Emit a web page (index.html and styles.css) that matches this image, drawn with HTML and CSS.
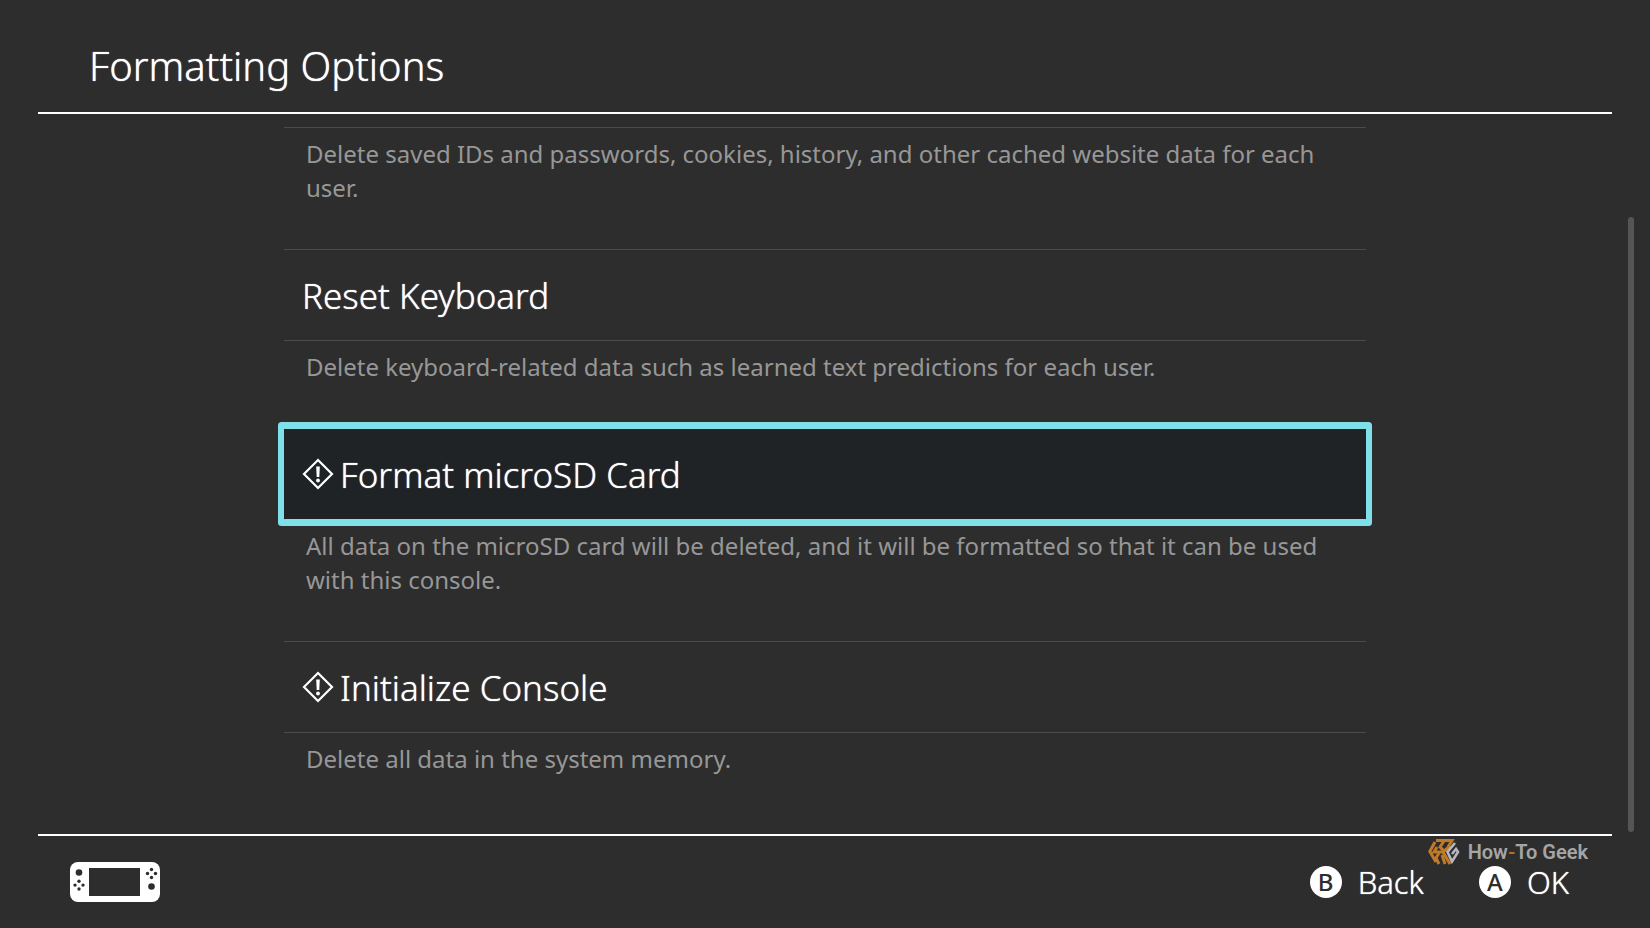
FILE: index.html
```html
<!DOCTYPE html>
<html lang="en">
<head>
    <meta charset="UTF-8">
    <meta name="viewport" content="width=device-width, initial-scale=1.0">
    <title>Formatting Options</title>

    <link rel="stylesheet" href="styles.css">

</head>
<body>

    <header class="page-header">
        <h1 class="page-title">Formatting Options</h1>
    </header>

    <main class="content">
        <ul class="options-list">
            <li class="option">
                <p class="option-dsc option-dsc-first">Delete saved IDs and passwords, cookies, history, and other cached website data for each user.</p>
            </li>
            <li class="option">
                <button class="option-btn" type="button">Reset Keyboard</button>
                <p class="option-dsc">Delete keyboard-related data such as learned text predictions for each user.</p>
            </li>
            <li class="option">
                <button class="option-btn selected" type="button">
                    <svg class="warning-icon" viewBox="0 0 32 32" aria-hidden="true">
                        <path d="M16 2 L30 16 L16 30 L2 16 Z" fill="none" stroke="currentColor" stroke-width="2.2"/>
                        <path d="M14.2 8.500 h3.600 l-.5 10.500 h-2.600 z" fill="currentColor"/>
                        <circle cx="16" cy="22.500" r="1.900" fill="currentColor"/>
                    </svg>
                    Format microSD Card
                </button>
                <p class="option-dsc">All data on the microSD card will be deleted, and it will be formatted so that it can be used with this console.</p>
            </li>
            <li class="option">
                <button class="option-btn" type="button">
                    <svg class="warning-icon" viewBox="0 0 32 32" aria-hidden="true">
                        <path d="M16 2 L30 16 L16 30 L2 16 Z" fill="none" stroke="currentColor" stroke-width="2.2"/>
                        <path d="M14.2 8.500 h3.600 l-.5 10.500 h-2.600 z" fill="currentColor"/>
                        <circle cx="16" cy="22.500" r="1.900" fill="currentColor"/>
                    </svg>
                    Initialize Console
                </button>
                <p class="option-dsc">Delete all data in the system memory.</p>
            </li>
        </ul>
        <div class="scroll-thumb"></div>
    </main>

    <footer class="page-footer">
        <svg class="console-icon" viewBox="0 0 90 40" aria-hidden="true">
            <rect width="90" height="40" rx="8" fill="#fff"/>
            <g fill="#2d2d2d">
                <rect x="19" y="6" width="51" height="28"/>
                <circle cx="9" cy="10.500" r="3.300"/>
                <circle cx="9" cy="19.200" r="1.700"/>
                <circle cx="9" cy="27" r="1.700"/>
                <circle cx="5" cy="23.100" r="1.700"/>
                <circle cx="13" cy="23.100" r="1.700"/>
                <circle cx="81.500" cy="7.500" r="1.700"/>
                <circle cx="81.500" cy="15.500" r="1.700"/>
                <circle cx="77.500" cy="11.500" r="1.700"/>
                <circle cx="85.500" cy="11.500" r="1.700"/>
                <circle cx="81.500" cy="24.500" r="3.300"/>
            </g>
        </svg>
        <div class="actions">
            <button class="action-btn" type="button"><span class="key">B</span>Back</button>
            <button class="action-btn" type="button"><span class="key">A</span>OK</button>
        </div>
        <div class="watermark">
            <svg class="watermark-logo" viewBox="0 0 32 28" aria-hidden="true">
                <g fill="none" stroke="#c27a26" stroke-width="3">
                    <path d="M8 2.500 H24 L20 9"/>
                    <path d="M16 3 L12 9 L16 13"/>
                    <path d="M7 4 L1.800 13.500 L8 24"/>
                    <path d="M9 9 L6 14 L14 14"/>
                    <path d="M22 8 L15 14 L22 26"/>
                    <path d="M11 15 L8 20 L11 26"/>
                    <path d="M14 17 L17 26"/>
                </g>
                <path d="M27 5 L19.500 14 L24 23.500 L30 14 L28 11 L24 16" fill="none" stroke="#b5b8bd" stroke-width="2.600"/>
            </svg>
            <span class="watermark-text">How<span class="dash">-</span>To Geek</span>
        </div>
    </footer>

</body>

</html>
```
FILE: styles.css
```css
body, body *, body *::before, body *::after {
    box-sizing: border-box;
    padding: 0;
    margin: 0;
}
:root {
    --bgc: #2d2d2d;
    --text-color: #fff;
    --dsc-color: #979797;
    --line-color: #4b4b4b;
    --select-color: #80e0ea;
    --select-bgc: #1f2326;
    --side-space: 38px;
}
body {
    background-color: var(--bgc);
    color: var(--text-color);
    font-family: "Noto Sans", "Open Sans", sans-serif;
    display: flex;
    flex-direction: column;
    min-height: 100vh;
}
.page-header {
    margin: 0 var(--side-space);
    padding: 38px 51px 18px;
    border-bottom: 2px solid var(--text-color);
}
.page-title {
    font-size: 40px;
    font-weight: 300;
    line-height: 56px;
    text-shadow: 0 0 1px var(--text-color);
}
.content {
    flex: 1;
    display: grid;
    grid-template-columns: 1fr minmax(0, 1082px) 1fr;
    padding-top: 13px;
}
.options-list {
    grid-column: 2;
    list-style-type: none;
}
.option-btn {
    display: flex;
    align-items: center;
    gap: 6px;
    width: 100%;
    height: 92px;
    padding: 0 18px;
    background: none;
    border: 0 solid var(--line-color);
    border-width: 1px 0;
    color: inherit;
    font: inherit;
    font-size: 35px;
    font-weight: 300;
    text-align: left;
    text-shadow: 0 0 1px var(--text-color);
}
.option-btn.selected {
    background-color: var(--select-bgc);
    border-color: var(--select-color);
    border-radius: 1px;
    box-shadow: 0 0 0 6px var(--select-color);
}
.warning-icon {
    width: 32px;
    height: 32px;
}
.option-dsc {
    color: var(--dsc-color);
    font-size: 24px;
    line-height: 34px;
    padding: 9px 22px 44px;
}
.option-dsc-first {
    border-top: 1px solid var(--line-color);
}
.scroll-thumb {
    grid-column: 3;
    justify-self: end;
    align-self: end;
    width: 6px;
    height: 87%;
    margin: 0 16px 2px 0;
    border-radius: 3px;
    background-color: #555;
}
.page-footer {
    position: relative;
    display: flex;
    align-items: center;
    justify-content: space-between;
    height: 94px;
    margin: 0 var(--side-space);
    padding: 0 43px 0 32px;
    border-top: 2px solid var(--text-color);
}
.console-icon {
    width: 90px;
    height: 40px;
}
.actions {
    display: flex;
    gap: 55px;
}
.action-btn {
    display: flex;
    align-items: center;
    gap: 16px;
    background: none;
    border: none;
    color: inherit;
    font: inherit;
    font-size: 31px;
    font-weight: 300;
    line-height: 32px;
    text-shadow: 0 0 1px var(--text-color);
}
.key {
    width: 32px;
    height: 32px;
    border-radius: 50%;
    background-color: var(--text-color);
    color: var(--bgc);
    font-size: 24px;
    font-weight: 500;
    line-height: 32px;
    text-align: center;
    text-shadow: none;
}
.watermark {
    position: absolute;
    top: 2px;
    right: 24px;
    display: flex;
    align-items: center;
    gap: 8px;
    color: #a5a5a5;
}
.watermark-logo {
    width: 32px;
    height: 28px;
}
.watermark-text {
    font-family: Roboto, sans-serif;
    font-size: 20px;
    font-weight: 600;
    line-height: 24px;
}
.dash {
    color: #b06f22;
}
```
